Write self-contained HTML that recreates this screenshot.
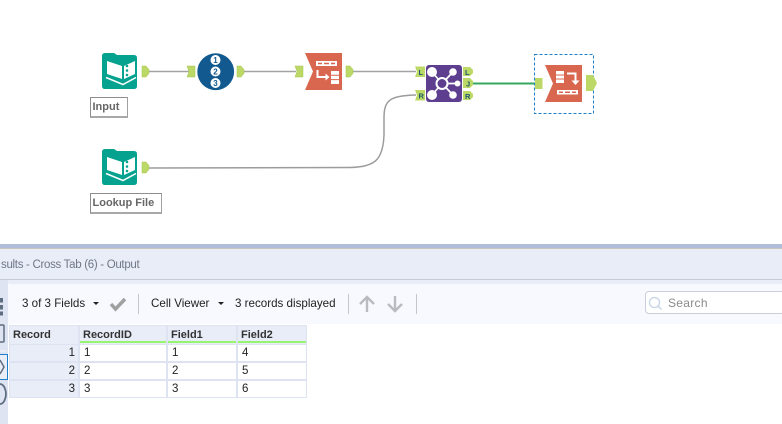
<!DOCTYPE html>
<html><head><meta charset="utf-8">
<style>
html,body{margin:0;padding:0;background:#fff}
body{width:782px;height:424px;overflow:hidden;position:relative;font-family:"Liberation Sans",sans-serif}
.a{position:absolute}
.t{position:absolute;white-space:nowrap;font-size:11.6px;line-height:14px;color:#222}
.c{position:absolute;background:#fff;font-size:11.5px;line-height:14px;color:#222;box-sizing:border-box;padding:2px 0 0 4px;height:16px}
.h{background:#e9edf8;font-weight:bold;color:#333;font-size:11px;height:18px;padding-left:3px}
.g{position:absolute;height:2px;background:#96f56e}
.r{background:#e9edf8;text-align:right;padding-right:3px;padding-left:0}
.sep{position:absolute;width:1px;top:294px;height:20px;background:#c4c6c8}
.l{position:absolute;box-sizing:border-box;height:21px;border:1px solid #8e8e8e;border-bottom:2px solid #a8a8a8;border-right-color:#a0a0a0;background:#fff;font-size:11px;font-weight:bold;color:#666;line-height:19px;padding-left:1.500px;white-space:nowrap}
</style></head><body>
<svg class="a" style="left:0;top:0" width="782" height="244" viewBox="0 0 782 244" fill="none">
<defs>
<g id="folder">
<path d="M0 3q0-3 3-3h9l3 2h17q3 0 3 3v28q0 3-3 3H3q-3 0-3-3z" fill="#05a28f"/>
<path d="M5 8l15 5v13l-15-5z" fill="#fff"/>
<path d="M22 13l11-5v13l-11 5z" fill="#fff"/>
<path d="M4 24.500l17 7 13-7" stroke="#fff" stroke-width="1.500"/>
<circle cx="25" cy="13" r="1.300" fill="#05a28f"/><circle cx="25" cy="17.500" r="1.300" fill="#05a28f"/><circle cx="25" cy="22" r="1.300" fill="#05a28f"/>
</g>
<path id="out" d="M0 0h4l3 3.500v4L4 11H0z" fill="#bcd968" stroke="#a4c44f" stroke-width=".5"/>
<path id="inp" d="M0 0h8v11H0l2-5.500z" fill="#bcd968" stroke="#a4c44f" stroke-width=".5"/>
</defs>
<path d="M149 71.500H190M241 71.500H296M353 71.500H416" stroke="#a3a3a3" stroke-width="1.500"/>
<path d="M149 168L350 167.500C375 167 383 160 384 135L384 118C384 100 390 95.500 416 95" stroke="#9c9c9c" stroke-width="1.500"/>
<path d="M473 83.500H537" stroke="#35a85c" stroke-width="2"/>
<use href="#folder" x="102" y="53"/>
<use href="#folder" x="102" y="149"/>
<use href="#out" x="142" y="66"/>
<use href="#out" x="142" y="162"/>
<use href="#inp" x="187" y="66"/>
<circle cx="215.700" cy="71.700" r="18.400" fill="#11598f"/>
<circle cx="215.500" cy="60" r="5" fill="#fff"/><circle cx="215.500" cy="71.500" r="5" fill="#fff"/><circle cx="215.500" cy="83" r="5" fill="#fff"/>
<text x="215.500" y="63" font-family="Liberation Sans" font-size="8" font-weight="bold" fill="#11598f" text-anchor="middle">1</text>
<text x="215.500" y="74.500" font-family="Liberation Sans" font-size="8" font-weight="bold" fill="#11598f" text-anchor="middle">2</text>
<text x="215.500" y="86" font-family="Liberation Sans" font-size="8" font-weight="bold" fill="#11598f" text-anchor="middle">3</text>
<use href="#out" x="237" y="66"/>
<use href="#inp" x="295" y="66"/>
<path d="M305 53H342V90H305L313 71.500z" fill="#d9664e"/>
<rect x="316" y="61" width="21" height="5" fill="#fff"/>
<path d="M318 62.700h4v1.600h-4zM324 62.700h5v1.600h-5zM331 62.700h4v1.600h-4z" fill="#d9664e"/>
<path d="M317.500 70v7h9" stroke="#fff" stroke-width="2"/><path d="M325.500 73.500l4 3.500-4 3.500z" fill="#fff"/>
<rect x="331" y="71" width="8" height="13" fill="#fff"/>
<path d="M331 75.300h8M331 79.600h8" stroke="#d9664e" stroke-width="1"/>
<use href="#out" x="346" y="66"/>
<path d="M415 66.500h10v10.500h-10l2-5.200z" fill="#bcd968"/><path d="M415 90h10v10.500h-10l2-5.200z" fill="#bcd968"/>
<text x="418.500" y="75" font-family="Liberation Sans" font-size="7.500" font-weight="bold" fill="#1d5a70">L</text>
<text x="418.500" y="98.500" font-family="Liberation Sans" font-size="7.500" font-weight="bold" fill="#1d5a70">R</text>
<rect x="426" y="65" width="36" height="37" rx="3" fill="#5e3f8f"/>
<path d="M442 83.500L432 72M442 83.500L453 72M442 83.500L432 95M442 83.500L453 95M442 83.500H457" stroke="#fff" stroke-width="1.700"/>
<circle cx="432" cy="72" r="5" fill="#fff"/><circle cx="453" cy="72" r="3.800" fill="#fff"/><circle cx="432" cy="95" r="5" fill="#fff"/><circle cx="453" cy="95" r="3.800" fill="#fff"/><circle cx="457.500" cy="83.500" r="3" fill="#fff"/>
<circle cx="442" cy="83.500" r="5.500" fill="#5e3f8f" stroke="#fff" stroke-width="2"/>
<path d="M463 67h7l3 3v3l-3 3h-7zM463 78h7l3 3v4l-3 3h-7zM463 91h7l3 3v3l-3 3h-7z" fill="#bcd968"/>
<text x="465" y="75" font-family="Liberation Sans" font-size="7.500" font-weight="bold" fill="#1d5a70">L</text>
<text x="466" y="86.500" font-family="Liberation Sans" font-size="7.500" font-weight="bold" fill="#1d5a70">J</text>
<text x="465" y="99" font-family="Liberation Sans" font-size="7.500" font-weight="bold" fill="#1d5a70">R</text>
<rect x="534.500" y="54.500" width="59" height="59" stroke="#1c7fc9" stroke-dasharray="3 2"/>
<path d="M535 78h7.500v11H535z" fill="#bcd968"/>
<path d="M545 65H582V102H545L553 83.500z" fill="#d9664e"/>
<rect x="556" y="71" width="8" height="12" fill="#fff"/>
<path d="M556 75h8M556 79h8" stroke="#d9664e" stroke-width="1"/>
<path d="M567 73.500h8.500v8" stroke="#fff" stroke-width="2"/><path d="M571.500 80.500h8l-4 4.500z" fill="#fff"/>
<rect x="557" y="90" width="21" height="4.500" fill="#fff"/>
<path d="M559 91.500h4v1.500h-4zM565 91.500h5v1.500h-5zM572 91.500h4v1.500h-4z" fill="#d9664e"/>
<path d="M586 75h7l4 8-4 8h-7z" fill="#bcd968"/>
</svg>

<div class="l" style="left:90px;top:97px;width:38px">Input</div>
<div class="l" style="left:90px;top:193px;width:72px">Lookup File</div>

<div class="a" style="left:0;top:244px;width:782px;height:4px;background:#b0bedc"></div>
<div class="a" style="left:0;top:248px;width:782px;height:1px;background:#c9c6c0"></div>
<div class="a" style="left:0;top:249px;width:782px;height:35px;background:#e9edf8"></div>
<div class="a" style="left:0;top:279px;width:782px;height:1px;background:#c8c9d2"></div>
<div class="a" style="left:0;top:284px;width:782px;height:140px;background:#fff"></div>
<div class="a" style="left:8px;top:284px;width:774px;height:40px;background:#f7f9fe;border-radius:3px 0 0 3px"></div>
<div class="a" style="left:0;top:280px;width:8px;height:144px;background:#dee4f1"></div>
<svg class="a" style="left:0;top:296px" width="9" height="128" viewBox="0 0 9 128" fill="none">
<path d="M0 2h3v4.500H0zM0 9h3v4.500H0zM0 15.500h3v4H0z" fill="#5f6d80"/>
<path d="M0 29h3q1 0 1 1v15q0 1-1 1H0" stroke="#5f6d80" stroke-width="1.500"/>
<path d="M0 55h6" stroke="#f5f6f8"/>
<rect x="-1" y="58.500" width="8.500" height="25" fill="#e9edf8" stroke="#1c7fc9"/>
<path d="M0 64l4 7-4 7" stroke="#5f6d80" stroke-width="1.500"/>
<path d="M0 88C4 88 6 94 6 98S4 108 0 108" stroke="#5f6d80" stroke-width="1.800"/>
</svg>

<div class="t" style="left:22px;top:297px">3 of 3 Fields</div>
<svg class="a" style="left:93px;top:302px" width="8" height="4"><path d="M0 0h6L3 3z" fill="#222"/></svg>
<svg class="a" style="left:108px;top:296px" width="20" height="16"><path d="M3 8l4.500 5L17 3" stroke="#a0a0a0" stroke-width="3.500" fill="none"/></svg>
<div class="sep" style="left:138px"></div>
<div class="t" style="left:151px;top:297px">Cell Viewer</div>
<svg class="a" style="left:218px;top:302px" width="8" height="4"><path d="M0 0h6L3 3z" fill="#222"/></svg>
<div class="t" style="left:235px;top:297px">3 records displayed</div>
<div class="sep" style="left:348px"></div>
<svg class="a" style="left:358px;top:295px" width="46" height="18" fill="none" stroke="#b8bcc0" stroke-width="2.400"><path d="M9 17V3M2 9l7-7 7 7M37 1v14M30 9l7 7 7-7"/></svg>
<div class="sep" style="left:416px"></div>
<div class="a" style="left:645px;top:291px;width:140px;height:23px;box-sizing:border-box;border:1px solid #c8cedc;border-radius:4px;background:#fff"></div>
<svg class="a" style="left:648px;top:296px" width="15" height="15" fill="none" stroke="#c5d3e6" stroke-width="1.300"><circle cx="6.500" cy="6.500" r="5"/><path d="M10 10l3.500 3.500"/></svg>
<div class="t" style="left:668px;top:296px;color:#8b8b8b;font-size:12px;letter-spacing:.3px">Search</div>

<div class="a" style="left:9px;top:325px;width:298px;height:73px;background:#dde3f0"></div>
<div class="c h" style="left:10px;top:326px;width:68px">Record</div>
<div class="c h" style="left:80px;top:326px;width:86px">RecordID</div>
<div class="c h" style="left:168px;top:326px;width:68px">Field1</div>
<div class="c h" style="left:238px;top:326px;width:68px">Field2</div>
<div class="g" style="left:80px;top:341px;width:86px"></div>
<div class="g" style="left:168px;top:341px;width:68px"></div>
<div class="g" style="left:238px;top:341px;width:68px"></div>

<div class="c r" style="left:10px;top:345px;width:68px;padding-top:1px">1</div>
<div class="c" style="left:80px;top:345px;width:86px;padding-top:1px">1</div>
<div class="c" style="left:168px;top:345px;width:68px;padding-top:1px">1</div>
<div class="c" style="left:238px;top:345px;width:68px;padding-top:1px">4</div>

<div class="c r" style="left:10px;top:363px;width:68px;padding-top:1px">2</div>
<div class="c" style="left:80px;top:363px;width:86px;padding-top:1px">2</div>
<div class="c" style="left:168px;top:363px;width:68px;padding-top:1px">2</div>
<div class="c" style="left:238px;top:363px;width:68px;padding-top:1px">5</div>

<div class="c r" style="left:10px;top:381px;width:68px;padding-top:1px">3</div>
<div class="c" style="left:80px;top:381px;width:86px;padding-top:1px">3</div>
<div class="c" style="left:168px;top:381px;width:68px;padding-top:1px">3</div>
<div class="c" style="left:238px;top:381px;width:68px;padding-top:1px">6</div>

<div class="t" style="left:1px;top:258px;color:#6f7785;font-size:11.500px;letter-spacing:-.3px">sults - Cross Tab (6) - Output</div>
</body></html>
